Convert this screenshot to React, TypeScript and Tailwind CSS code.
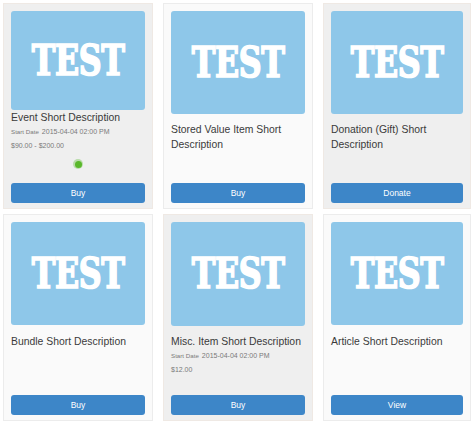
import React from "react";

type Item = {
  title: string;
  action: string;
  startDate?: string;
  price?: string;
  radio?: boolean;
  muted: boolean;
  imgH: number;
  titleGap: number;
};

const items: Item[] = [
  {
    title: "Event Short Description",
    action: "Buy",
    startDate: "2015-04-04 02:00 PM",
    price: "$90.00 - $200.00",
    radio: true,
    muted: true,
    imgH: 99,
    titleGap: 0,
  },
  { title: "Stored Value Item Short Description", action: "Buy", muted: false, imgH: 103, titleGap: 8 },
  { title: "Donation (Gift) Short Description", action: "Donate", muted: true, imgH: 103, titleGap: 8 },
  { title: "Bundle Short Description", action: "Buy", muted: false, imgH: 103, titleGap: 9 },
  {
    title: "Misc. Item Short Description",
    action: "Buy",
    startDate: "2015-04-04 02:00 PM",
    price: "$12.00",
    muted: true,
    imgH: 104,
    titleGap: 8,
  },
  { title: "Article Short Description", action: "View", muted: false, imgH: 103, titleGap: 9 },
];

function Thumb({ h }: { h: number }) {
  return (
    <div
      className="flex w-full items-center justify-center rounded-[3px] bg-[#8ec7e9]"
      style={{ height: h }}
    >
      <span
        className="inline-block origin-center scale-x-[0.84] text-[42px] leading-none font-bold tracking-[-0.5px] text-white [-webkit-text-stroke:1.6px_#fff]"
        style={{ fontFamily: '"DejaVu Serif Condensed", "DejaVu Serif", serif', fontStretch: "condensed" }}
      >
        TEST
      </span>
    </div>
  );
}

function Card({ item }: { item: Item }) {
  return (
    <div
      className={`flex flex-col border px-[7px] pt-[7px] pb-[5px] ${
        item.muted ? "border-[#efe9e4] bg-[#efefef]" : "border-[#ececec] bg-[#fafafa]"
      }`}
    >
      <Thumb h={item.imgH} />
      <div
        className="text-[10.4px] leading-[15px] text-[#3a3a3a]"
        style={{ marginTop: item.titleGap }}
      >
        {item.title}
      </div>
      {item.startDate && (
        <div className="flex items-baseline gap-[3px] leading-[13px] text-[#7a7a7a]">
          <span className="text-[6.2px]">Start Date</span>
          <span className="text-[7px]">{item.startDate}</span>
        </div>
      )}
      {item.price && (
        <div className="mt-[2px] text-[7px] leading-[12px] text-[#7a7a7a]">{item.price}</div>
      )}
      {item.radio && (
        <div className="mt-[7px] flex justify-center">
          <span className="flex h-[10px] w-[10px] items-center justify-center rounded-full bg-[#b9dcaa]">
            <span className="h-[7px] w-[7px] rounded-full bg-[#5ab82b]" />
          </span>
        </div>
      )}
      <div className="flex-1" />
      <button className="flex h-[20px] w-full items-center justify-center rounded-[3px] bg-[#3d86c8] text-[8.5px] text-white">
        {item.action}
      </button>
    </div>
  );
}

export default function App() {
  return (
    <div
      className="h-[425px] w-[474px] bg-white pl-[3px] pt-[3px]"
      style={{ fontFamily: '"Liberation Sans", Arial, sans-serif' }}
    >
      <div className="grid grid-cols-[150px_150px_148px] grid-rows-[206px_207px] gap-x-[10px] gap-y-[5px]">
        {items.map((it, i) => (
          <Card key={i} item={it} />
        ))}
      </div>
    </div>
  );
}
